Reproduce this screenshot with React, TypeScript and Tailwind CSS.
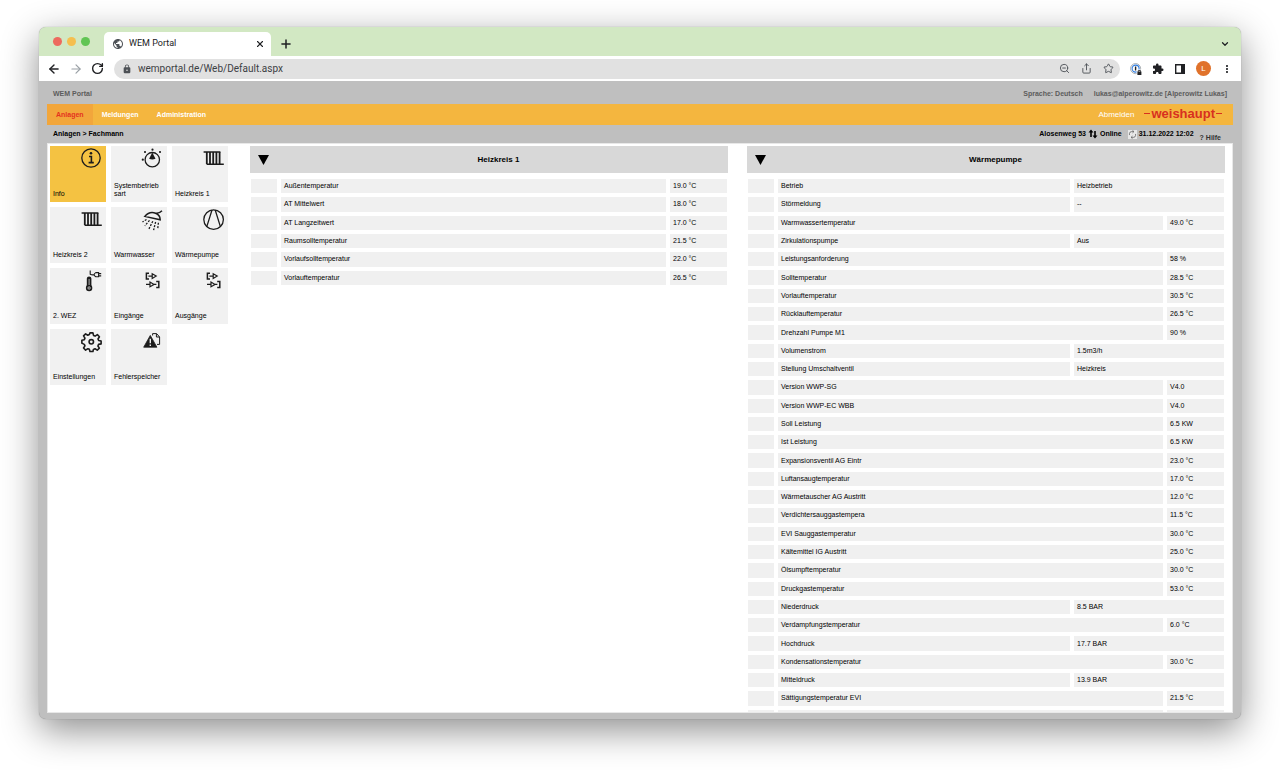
import type { ReactNode } from 'react';
import { ArrowLeft, ArrowRight, ChevronDown, Plus, RotateCw, Share, Star, X, ZoomOut } from 'lucide-react';
import { MdExtension, MdLock, MdMoreVert, MdPublic } from 'react-icons/md';

type Row = { label: string; value: string; wide?: boolean };

const heizkreis: Row[] = [
  { label: 'Außentemperatur', value: '19.0 °C' },
  { label: 'AT Mittelwert', value: '18.0 °C' },
  { label: 'AT Langzeitwert', value: '17.0 °C' },
  { label: 'Raumsolltemperatur', value: '21.5 °C' },
  { label: 'Vorlaufsolltemperatur', value: '22.0 °C' },
  { label: 'Vorlauftemperatur', value: '26.5 °C' },
];

const waermepumpe: Row[] = [
  { label: 'Betrieb', value: 'Heizbetrieb', wide: true },
  { label: 'Störmeldung', value: '--', wide: true },
  { label: 'Warmwassertemperatur', value: '49.0 °C' },
  { label: 'Zirkulationspumpe', value: 'Aus', wide: true },
  { label: 'Leistungsanforderung', value: '58 %' },
  { label: 'Solltemperatur', value: '28.5 °C' },
  { label: 'Vorlauftemperatur', value: '30.5 °C' },
  { label: 'Rücklauftemperatur', value: '26.5 °C' },
  { label: 'Drehzahl Pumpe M1', value: '90 %' },
  { label: 'Volumenstrom', value: '1.5m3/h', wide: true },
  { label: 'Stellung Umschaltventil', value: 'Heizkreis', wide: true },
  { label: 'Version WWP-SG', value: 'V4.0' },
  { label: 'Version WWP-EC WBB', value: 'V4.0' },
  { label: 'Soll Leistung', value: '6.5 KW' },
  { label: 'Ist Leistung', value: '6.5 KW' },
  { label: 'Expansionsventil AG Eintr', value: '23.0 °C' },
  { label: 'Luftansaugtemperatur', value: '17.0 °C' },
  { label: 'Wärmetauscher AG Austritt', value: '12.0 °C' },
  { label: 'Verdichtersauggastempera', value: '11.5 °C' },
  { label: 'EVI Sauggastemperatur', value: '30.0 °C' },
  { label: 'Kältemittel IG Austritt', value: '25.0 °C' },
  { label: 'Ölsumpftemperatur', value: '30.0 °C' },
  { label: 'Druckgastemperatur', value: '53.0 °C' },
  { label: 'Niederdruck', value: '8.5 BAR', wide: true },
  { label: 'Verdampfungstemperatur', value: '6.0 °C' },
  { label: 'Hochdruck', value: '17.7 BAR', wide: true },
  { label: 'Kondensationstemperatur', value: '30.0 °C' },
  { label: 'Mitteldruck', value: '13.9 BAR', wide: true },
  { label: 'Sättigungstemperatur EVI', value: '21.5 °C' },
  { label: '', value: '' },
];

function Icon({ children }: { children: ReactNode }) {
  return (
    <svg viewBox="0 0 22 22" className="size-[22px] overflow-visible" fill="none" stroke="#1c1c1c" strokeWidth="1.3" aria-hidden="true">
      {children}
    </svg>
  );
}

const infoIcon = (
  <Icon>
    <circle cx="11" cy="11" r="9.2" />
    <path d="M9 9.5h2.4v6M8.6 15.6h5.2" strokeWidth="1.6" />
    <circle cx="11" cy="6.2" r="1.3" fill="#1c1c1c" stroke="none" />
  </Icon>
);

const modeIcon = (
  <Icon>
    <circle cx="11.3" cy="12.7" r="7.2" />
    <path d="M11.3 5.6l3.2 6.2q-3.2 1.2-6.4 0z" fill="#1c1c1c" stroke="none" />
    <g fill="#1c1c1c" stroke="none">
      <circle cx="11.5" cy="2.7" r="1.1" />
      <circle cx="4" cy="5" r="1.1" />
      <circle cx="19" cy="5" r="1.1" />
      <circle cx="1.8" cy="12.7" r="1.1" />
    </g>
  </Icon>
);

const radiatorIcon = (
  <Icon>
    <path d="M1.6 5h16.8M4.6 17.2h17.2" strokeWidth="1.5" />
    <path d="M4.8 5v12M8 5v12M11.2 5v12M14.4 5v12M17.6 5v12" strokeWidth="1.8" />
  </Icon>
);

const showerIcon = (
  <Icon>
    <path d="M3.8 8.4C7 4.6 11 3.8 14.6 5.2c3 1.3 4.8 3.4 4.6 6.6L3.8 8.4zM14.8 5.2q3.4.4 6.2-2.4" strokeWidth="1.5" />
    <path d="M5.5 11.5l-4 2.4M8.5 12.4l-4.6 5.4M11.8 13.2l-4 8M14.6 14l-2 8.2M17.4 14.8l-.6 5.4" strokeDasharray="2 1.3" />
  </Icon>
);

const pumpIcon = (
  <Icon>
    <circle cx="11.6" cy="11.6" r="9.8" />
    <path d="M4.8 18.6L10 2M18.4 18.6L13.2 2" />
  </Icon>
);

const heaterIcon = (
  <Icon>
    <rect x="6.8" y="7.6" width="4.6" height="12" rx="2.2" fill="#1c1c1c" stroke="none" />
    <circle cx="9.1" cy="19" r="3.2" fill="#1c1c1c" stroke="none" />
    <path d="M9.1 10v6" stroke="#f1f1f1" strokeWidth="0.7" />
    <circle cx="9.1" cy="19" r="1.2" stroke="#f1f1f1" strokeWidth="0.7" />
    <path d="M10.2 1.6v3.6q1.8 1 3.8.6M18.6 3.6h-2.8q-3.4 2.1 0 4.2h2.8zM18.6 4.6h2.6M18.6 6.9h2.6" strokeWidth="1.1" />
  </Icon>
);

const portsIcon = (
  <Icon>
    <path d="M8 4.3H5.4v5.6H8M15.2 12.6h2.6v6h-2.6" strokeWidth="1.5" />
    <path d="M7.4 7.1h3.8M5 15.4h4M13 15.4h2.4" strokeWidth="1.3" />
    <path d="M11.2 4.7v4.8l4-2.4zM9 13v4.8l4-2.4z" strokeWidth="1.2" />
  </Icon>
);

const gearIcon = (
  <Icon>
    <circle cx="11.3" cy="11.8" r="2.2" strokeWidth="1.6" />
    <path
      transform="translate(1.1 1.3) scale(.94)"
      d="M9.4 1.7h3.2l.6 2.7 1.7.7 2.4-1.5 2.2 2.2L18 8.2l.7 1.6 2.6.6v3l-2.7.5-.7 1.7 1.5 2.3-2.2 2.2-2.4-1.5-1.7.7-.5 2.2H9.4l-.6-2.3-1.6-.7-2.4 1.5-2.2-2.2 1.5-2.3-.7-1.6L.8 12.6V9.5l2.6-.6.7-1.6-1.5-2.4 2.2-2.2 2.3 1.5 1.7-.7z"
      strokeWidth="1.7"
      strokeLinejoin="round"
    />
  </Icon>
);

const faultIcon = (
  <Icon>
    <path d="M11.6 5.5V3.6h4L18.6 7v7.4H16M15.4 3.8V7h3" strokeWidth="1" />
    <path d="M9.3 5.4l6.6 11.8H2.7z" fill="#1c1c1c" strokeWidth="0.8" strokeLinejoin="round" />
    <path d="M9.3 8.8v4.4M9.3 14.4v1.5" stroke="#f1f1f1" strokeWidth="1.4" />
  </Icon>
);

const tiles = [
  { label: 'Info', icon: infoIcon, active: true },
  { label: 'Systembetrieb sart', icon: modeIcon },
  { label: 'Heizkreis 1', icon: radiatorIcon },
  { label: 'Heizkreis 2', icon: radiatorIcon },
  { label: 'Warmwasser', icon: showerIcon },
  { label: 'Wärmepumpe', icon: pumpIcon },
  { label: '2. WEZ', icon: heaterIcon },
  { label: 'Eingänge', icon: portsIcon },
  { label: 'Ausgänge', icon: portsIcon },
  { label: 'Einstellungen', icon: gearIcon },
  { label: 'Fehlerspeicher', icon: faultIcon },
];

function Panel({ title, rows, height }: { title: string; rows: Row[]; height: string }) {
  return (
    <section className="min-w-0 flex-1">
      <h2 className="mx-[3px] flex h-[27px] items-center bg-[#d8d8d8] text-[8px] font-bold">
        <button aria-label={`${title} einklappen`} className="pl-2">
          <svg viewBox="0 0 12 12" className="size-[11px] fill-black">
            <path d="M0 1h12L6 12z" />
          </svg>
        </button>
        <span className="flex-1 text-center">{title}</span>
      </h2>
      <table className={`mt-[2px] w-full table-fixed border-separate border-spacing-[4px] text-left ${height}`}>
        <colgroup>
          <col className="w-[26px]" />
          <col />
          <col className="w-[89px]" />
          <col className="w-[57px]" />
        </colgroup>
        <tbody>
          {rows.map((row) => (
            <tr key={row.label} className="h-[14px]">
              <td className="bg-[#f0f0f0]" />
              <th scope="row" colSpan={row.wide ? 1 : 2} className="bg-[#f0f0f0] px-[3px] font-normal">
                {row.label}
              </th>
              <td colSpan={row.wide ? 2 : 1} className="bg-[#f0f0f0] px-[3px]">
                {row.value}
              </td>
            </tr>
          ))}
        </tbody>
      </table>
    </section>
  );
}

function BrowserBar() {
  return (
    <header className="font-['Roboto',sans-serif] text-[#202124]">
      <div className="flex h-[29px] items-end bg-[#d2e8c3] pr-[11px]">
        <div className="flex h-[29px] w-[65px] items-center gap-[5px] pl-[14px]">
          <span className="size-[9px] rounded-full bg-[#ed6a5e]" />
          <span className="size-[9px] rounded-full bg-[#f5bf4f]" />
          <span className="size-[9px] rounded-full bg-[#61c554]" />
        </div>
        <div className="flex h-6 w-[167px] items-center rounded-t-[5px] bg-white pr-[6px] pl-2">
          <MdPublic className="size-3 text-[#4d5156]" />
          <span className="flex-1 pl-[5px] text-[9px]">WEM Portal</span>
          <button aria-label="Tab schließen">
            <X className="size-[10px]" strokeWidth={2.6} />
          </button>
        </div>
        <button aria-label="Neuer Tab" className="flex h-6 items-center px-2">
          <Plus className="size-[14px]" strokeWidth={2.6} />
        </button>
        <button aria-label="Tabs durchsuchen" className="ml-auto flex h-6 items-center">
          <ChevronDown className="size-[10px]" strokeWidth={3} />
        </button>
      </div>
      <div className="flex h-[25px] items-center bg-white px-2">
        <div className="flex items-center gap-2 pr-[10px]">
          <button aria-label="Zurück">
            <ArrowLeft className="size-[14px]" strokeWidth={2.4} />
          </button>
          <button aria-label="Vorwärts">
            <ArrowRight className="size-[14px] text-[#9aa0a6]" strokeWidth={2} />
          </button>
          <button aria-label="Neu laden">
            <RotateCw className="size-[13px]" strokeWidth={2.6} />
          </button>
        </div>
        <div className="flex h-5 flex-1 items-center rounded-full bg-[#e1e1e1] pr-[6px] pl-2 text-[#4d5156]">
          <MdLock className="size-[10px]" />
          <input
            aria-label="Adresse"
            defaultValue="wemportal.de/Web/Default.aspx"
            className="min-w-0 flex-1 bg-transparent pl-[6px] text-[10px] text-[#3c4043] outline-none"
          />
          <div className="flex items-center gap-[11px]">
            <button aria-label="Zoom">
              <ZoomOut className="size-[11px]" />
            </button>
            <button aria-label="Teilen">
              <Share className="size-[11px]" />
            </button>
            <button aria-label="Lesezeichen">
              <Star className="size-[11px]" />
            </button>
          </div>
        </div>
        <div className="flex items-center gap-[10px] pl-[10px]">
          <button aria-label="Passwörter">
            <svg viewBox="0 0 12 12" className="size-3" fill="none">
              <circle cx="5.6" cy="5.6" r="5" stroke="#8f959b" strokeWidth="0.8" />
              <circle cx="5.6" cy="5.6" r="3.5" stroke="#2f7de1" strokeWidth="1.1" />
              <path d="M5.6 3.6v4" stroke="#202124" strokeWidth="1.4" />
              <path d="M6.6 6.4h5.4V12H6.6z" fill="#fff" />
              <path d="M7.4 8.6h4V12h-4z" fill="#202124" />
              <path d="M8.3 8.8V7.5h2.2v1.3" stroke="#202124" strokeWidth="0.8" />
            </svg>
          </button>
          <button aria-label="Erweiterungen">
            <MdExtension className="size-3" />
          </button>
          <button aria-label="Seitenleiste">
            <svg viewBox="0 0 12 12" className="size-3">
              <path d="M1.7 1.7h8.6v8.6H1.7z" fill="none" stroke="#202124" strokeWidth="1.4" />
              <path d="M7 1h4v10H7z" fill="#202124" />
            </svg>
          </button>
          <button aria-label="Profil" className="size-[15px] rounded-full bg-[#e0722b] text-[8px] text-white">
            L
          </button>
          <button aria-label="Menü">
            <MdMoreVert className="size-3" />
          </button>
        </div>
      </div>
    </header>
  );
}

export default function App() {
  return (
    <div className="flex h-screen flex-col bg-white px-[39px] pt-[27px] pb-[52px]">
      <div className="flex min-h-0 flex-1 flex-col overflow-hidden rounded-[7px] bg-[#bfbfbf] shadow-[0_0_1px_rgba(0,0,0,0.4),0_11px_36px_rgba(0,0,0,0.45)]">
        <BrowserBar />
        <div className="flex min-h-0 flex-1 flex-col px-2 pb-[6px] font-['Liberation_Sans',Arial,sans-serif] text-[7px] leading-[8px] text-black">
          <div className="flex h-[23px] items-center justify-between px-[6px] pt-[2px] font-bold text-[#5c5c5c]">
            <span>WEM Portal</span>
            <div className="flex gap-[11px]">
              <span>Sprache: Deutsch</span>
              <span>lukas@alperowitz.de [Alperowitz Lukas]</span>
            </div>
          </div>
          <div className="flex h-[21px] items-center justify-between bg-[#f4b63f] pr-[11px] text-white">
            <nav className="flex h-full font-bold">
              <a href="#anlagen" className="flex items-center bg-[#f2a63b] px-[9px] text-[#e5331f]">
                Anlagen
              </a>
              <a href="#meldungen" className="flex items-center px-[9px]">
                Meldungen
              </a>
              <a href="#administration" className="flex items-center px-[9px]">
                Administration
              </a>
            </nav>
            <div className="flex items-center gap-[10px]">
              <a href="#abmelden" className="text-[8px]">
                Abmelden
              </a>
              <span className="flex items-center gap-px pb-[2px] text-[13px] leading-[16px] font-bold text-[#d8301f]">
                <span className="h-px w-[6px] bg-[#d8301f]" />
                weishaupt
                <span className="h-px w-[6px] bg-[#d8301f]" />
              </span>
            </div>
          </div>
          <div className="flex h-[18px] items-center justify-between pr-3 pl-[6px] font-bold">
            <span>Anlagen &gt; Fachmann</span>
            <div className="flex h-full items-center">
              <span>Alosenweg 53</span>
              <svg viewBox="0 0 10 10" className="mx-[2px] size-[10px]">
                <path d="M3 .5L.5 3.5h1.7V8h1.6V3.5h1.7zM7 9.5l2.5-3H7.8V2H6.2v4.5H4.5z" />
              </svg>
              <span>Online</span>
              <button aria-label="Aktualisieren" className="mr-[2px] ml-[6px] bg-[#e8e8e8]">
                <svg viewBox="0 0 10 10" className="size-[9px]" fill="none" stroke="#666" strokeWidth="0.9">
                  <path d="M1.6 5.6V4Q1.8 1.8 4 1.8h2.4M5 .4l1.6 1.4L5 3.2M8.4 4.4V6Q8.2 8.2 6 8.2H3.6M5 6.8L3.4 8.2 5 9.6" />
                </svg>
              </button>
              <span>31.12.2022 12:02</span>
              <a href="#hilfe" className="self-end pb-px pl-[6px] text-[#333]">
                ? Hilfe
              </a>
            </div>
          </div>
          <main className="min-h-0 flex-1 border border-[#e8e8e8] bg-white px-[2px] pt-[2px]">
            <div className="flex h-full items-start overflow-hidden pr-[2px]">
              <nav className="mr-[19px] grid shrink-0 grid-cols-3 gap-[5px]">
                {tiles.map((tile) => (
                  <a
                    key={tile.label}
                    href="#fachmann"
                    className={`flex size-14 flex-col justify-between px-[3px] pt-px pb-1 ${tile.active ? 'bg-[#f4c242]' : 'bg-[#f1f1f1]'}`}
                  >
                    <span className="self-end pr-px">{tile.icon}</span>
                    <span>{tile.label}</span>
                  </a>
                ))}
              </nav>
              <div className="flex min-w-0 flex-1 gap-[13px]">
                <Panel title="Heizkreis 1" rows={heizkreis} height="h-[114px]" />
                <Panel title="Wärmepumpe" rows={waermepumpe} height="h-[553px]" />
              </div>
            </div>
          </main>
        </div>
      </div>
    </div>
  );
}
